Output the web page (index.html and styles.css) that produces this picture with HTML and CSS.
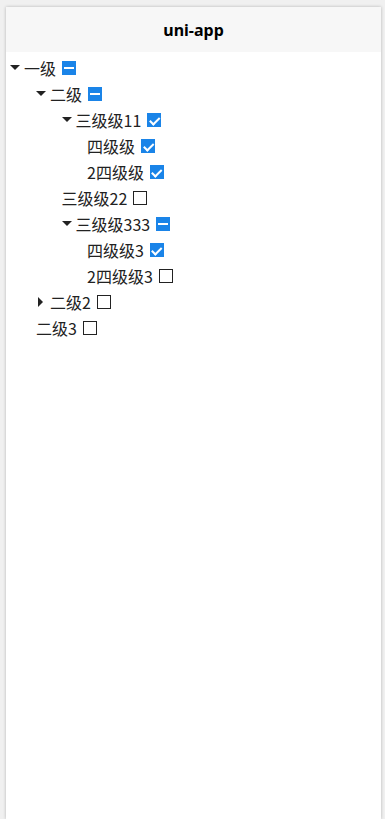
FILE: index.html
```html
<!DOCTYPE html>
<html lang="zh">
<head>
<meta charset="utf-8">
<title>uni-app</title>
<link rel="stylesheet" href="styles.css">
</head>
<body>
<div class="page">
  <header class="navbar"><span class="title">uni-app</span></header>
  <main class="tree">
    <div class="row lv1"><span class="arrow down"></span><span class="label">一级</span><span class="cb half"></span></div>
    <div class="row lv2"><span class="arrow down"></span><span class="label">二级</span><span class="cb half"></span></div>
    <div class="row lv3"><span class="arrow down"></span><span class="label">三级级11</span><span class="cb on"></span></div>
    <div class="row lv4"><span class="label">四级级</span><span class="cb on"></span></div>
    <div class="row lv4"><span class="label">2四级级</span><span class="cb on"></span></div>
    <div class="row lv3"><span class="label">三级级22</span><span class="cb"></span></div>
    <div class="row lv3"><span class="arrow down"></span><span class="label">三级级333</span><span class="cb half"></span></div>
    <div class="row lv4"><span class="label">四级级3</span><span class="cb on"></span></div>
    <div class="row lv4"><span class="label">2四级级3</span><span class="cb"></span></div>
    <div class="row lv2"><span class="arrow right"></span><span class="label">二级2</span><span class="cb"></span></div>
    <div class="row lv2"><span class="label">二级3</span><span class="cb"></span></div>
  </main>
</div>
</body>
</html>
```
FILE: styles.css
```css
html, body {
  margin: 0;
  padding: 0;
  height: 100%;
  overflow: hidden;
}
body {
  background: #f0f0f0;
  font-family: "Noto Sans CJK SC", "Noto Sans", sans-serif;
  color: #222;
}
.page {
  margin: 7px 4px 0 6px;
  height: calc(100vh - 7px);
  background: #fff;
  box-shadow: 0 0 3px rgba(0, 0, 0, 0.25);
}
.navbar {
  height: 45px;
  background: #f7f7f7;
  display: flex;
  align-items: center;
  justify-content: center;
}
.title {
  font-family: "Noto Sans", "Noto Sans CJK SC", sans-serif;
  font-weight: 700;
  font-size: 16px;
  color: #000;
}
.tree {
  padding-top: 3px;
}
.row {
  height: 26px;
  display: flex;
  align-items: center;
  font-size: 16px;
  line-height: 26px;
}
.lv1 { padding-left: 4px; }
.lv2 { padding-left: 30px; }
.lv3 { padding-left: 55.5px; }
.lv4 { padding-left: 81px; }
.label {
  margin-right: 6px;
  white-space: nowrap;
}
.arrow {
  width: 10px;
  height: 10px;
  margin-right: 4px;
  position: relative;
  flex: none;
}
.arrow.down::before {
  content: "";
  position: absolute;
  left: 0;
  top: 2px;
  border-left: 5px solid transparent;
  border-right: 5px solid transparent;
  border-top: 5px solid #222;
}
.arrow.right::before {
  content: "";
  position: absolute;
  left: 2px;
  top: 0;
  border-top: 5px solid transparent;
  border-bottom: 5px solid transparent;
  border-left: 5px solid #222;
}
.arrow.right {
  margin-right: 4px;
}
.cb {
  width: 14px;
  height: 14px;
  box-sizing: border-box;
  border: 1px solid #222;
  background: #fff;
  position: relative;
  flex: none;
}
.cb.on, .cb.half {
  border-color: #1a84e8;
  background: #1a84e8;
}
.cb.half::after {
  content: "";
  position: absolute;
  left: 1px;
  right: 1px;
  top: 5px;
  height: 2px;
  background: #fff;
}
.cb.on::after {
  content: "";
  position: absolute;
  left: 3.5px;
  top: 0.5px;
  width: 3.5px;
  height: 7.5px;
  border-right: 2px solid #fff;
  border-bottom: 2px solid #fff;
  transform: rotate(45deg);
}
```
